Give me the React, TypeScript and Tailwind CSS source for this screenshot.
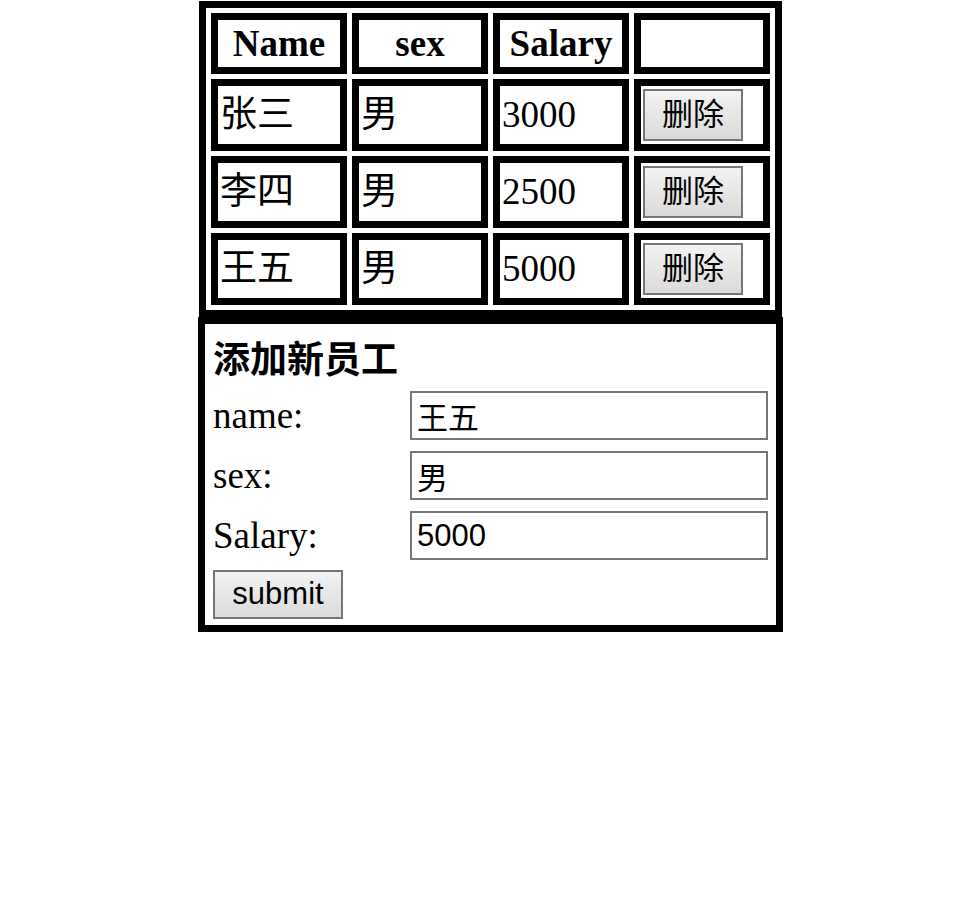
const serif = "font-['Liberation_Serif','Noto_Sans_CJK_SC',serif]"
const sans = "font-['Liberation_Sans','Noto_Sans_CJK_SC',sans-serif]"

const employees = [
    { name: '张三', sex: '男', salary: 3000 },
    { name: '李四', sex: '男', salary: 2500 },
    { name: '王五', sex: '男', salary: 5000 },
]

const fields = [
    { label: 'name:', value: '王五' },
    { label: 'sex:', value: '男' },
    { label: 'Salary:', value: '5000' },
]

const grayButton =
    "border-2 border-[#767676] bg-gradient-to-b from-[#f3f3f3] to-[#dadada] text-[31px] text-black " + sans

export default function App() {
    return (
        <div className={`min-h-[922px] bg-white text-black ${serif}`}>
            <div className="pl-[199px] pt-px">
                <table className="w-[583px] border-separate border-spacing-[5px] border-[7px] border-black">
                    <thead>
                        <tr>
                            {['Name', 'sex', 'Salary', ''].map((h, i) => (
                                <th
                                    key={i}
                                    className="w-[136px] h-[61px] border-[7px] border-black px-[2px] text-center text-[37px] leading-[40px] font-bold align-middle"
                                >
                                    {h}
                                </th>
                            ))}
                        </tr>
                    </thead>
                    <tbody>
                        {employees.map((e) => (
                            <tr key={e.name}>
                                <td className="h-[72px] border-[7px] border-black px-[2px] text-[37px] align-middle">{e.name}</td>
                                <td className="h-[72px] border-[7px] border-black px-[2px] text-[37px] align-middle">{e.sex}</td>
                                <td className="h-[72px] border-[7px] border-black px-[2px] text-[37px] align-middle">{e.salary}</td>
                                <td className="h-[72px] border-[7px] border-black px-[2px] align-middle">
                                    <button className={`flex w-[100px] h-[52px] items-center justify-center ${grayButton}`}>
                                        删除
                                    </button>
                                </td>
                            </tr>
                        ))}
                    </tbody>
                </table>
            </div>

            <div className="ml-[198px] w-[585px] border-[7px] border-black px-[8px] pt-[7px] pb-[6px]">
                <h3 className={`flex h-[60px] items-center text-[37px] font-bold ${sans}`}>添加新员工</h3>
                {fields.map((f) => (
                    <div key={f.label} className="flex h-[49px] items-center mb-[11px]">
                        <span className="w-[198px] text-[37px] leading-[49px]">{f.label}</span>
                        <input
                            readOnly
                            value={f.value}
                            className={`w-[358px] h-[49px] border-2 border-[#767676] bg-white px-[5px] text-[31px] text-black outline-none ${sans}`}
                        />
                    </div>
                ))}
                <button className={`flex w-[130px] h-[49px] items-center justify-center -mt-px ${grayButton}`}>
                    submit
                </button>
            </div>
        </div>
    )
}
